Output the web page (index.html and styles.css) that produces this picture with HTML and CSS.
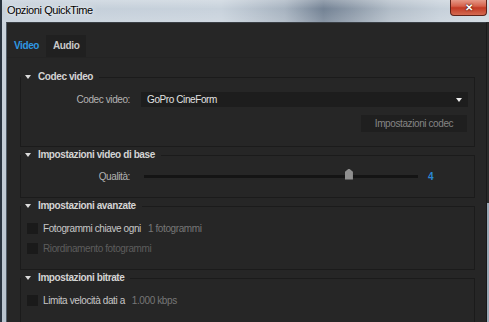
FILE: index.html
```html
<!DOCTYPE html>
<html lang="it">
<head>
  <meta charset="UTF-8">
  <meta name="viewport" content="width=device-width, initial-scale=1.0">
  <title>Opzioni QuickTime</title>
  <link rel="stylesheet" href="styles.css">
</head>
<body>
  <div class="window">
    <div class="titlebar">
      <span class="title">Opzioni QuickTime</span>
      <span class="close-btn">&#x2715;</span>
    </div>
    <div class="frame">
      <div class="client">
        <div class="tabs">
          <span class="tab active">Video</span>
          <span class="tab">Audio</span>
        </div>
        <div class="panel">
          <!-- codec -->
          <fieldset class="group">
            <legend><span class="twisty"></span>Codec video</legend>
            <div class="field-row">
              <span class="field-label">Codec video:</span>
              <div class="select"><span>GoPro CineForm</span><span class="select-arrow"></span></div>
            </div>
            <div class="actions">
              <span class="btn disabled">Impostazioni codec</span>
            </div>
          </fieldset>

          <!-- basic video settings -->
          <fieldset class="group">
            <legend><span class="twisty"></span>Impostazioni video di base</legend>
            <div class="field-row slider-row">
              <span class="field-label">Qualità:</span>
              <div class="slider">
                <div class="track"><span class="thumb" style="left: 74.8%;"></span></div>
                <span class="slider-value">4</span>
              </div>
            </div>
          </fieldset>

          <!-- advanced -->
          <fieldset class="group">
            <legend><span class="twisty"></span>Impostazioni avanzate</legend>
            <div class="check-row">
              <span class="check"></span>
              <span>Fotogrammi chiave ogni</span>
              <span class="hint">1 fotogrammi</span>
            </div>
            <div class="check-row disabled">
              <span class="check"></span>
              <span>Riordinamento fotogrammi</span>
            </div>
          </fieldset>

          <!-- bitrate -->
          <fieldset class="group">
            <legend><span class="twisty"></span>Impostazioni bitrate</legend>
            <div class="check-row">
              <span class="check"></span>
              <span>Limita velocità dati a</span>
              <span class="hint">1.000 kbps</span>
            </div>
            <div class="check-row spacer"></div>
          </fieldset>
        </div>
      </div>
    </div>
  </div>
</body>
</html>
```

FILE: styles.css
```css
/* Base */
* {
  box-sizing: border-box;
}
html, body {
  margin: 0;
  padding: 0;
}
body {
  width: 489px;
  height: 322px;
  overflow: hidden;
  font-family: "Liberation Sans", Arial, sans-serif;
  font-size: 10px;
  letter-spacing: -0.4px;
  background: #c5cdd6;
}

/* Window chrome */
.window {
  height: 322px;
  display: flex;
  flex-direction: column;
  border-left: 2px solid #29333f;
  background: linear-gradient(#ccd5de, #b8c3ce);
}
.titlebar {
  height: 22px;
  flex: none;
  display: flex;
  justify-content: space-between;
  align-items: flex-start;
  background:
    linear-gradient(rgba(255,255,255,0.25), rgba(255,255,255,0) 40%, rgba(255,255,255,0.15)),
    linear-gradient(to right, #c3ced9 0%, #c8d2dc 45%, #a7b3c0 58%, #738294 66%, #8d9aa9 72%, #b2bdc8 80%, #c6d0da 90%, #cfd8e0 100%);
}
.title {
  padding: 4px 0 0 5px;
  font-size: 11px;
  letter-spacing: -0.4px;
  color: #000;
  text-shadow: 0 0 6px rgba(255,255,255,0.9), 0 0 2px rgba(255,255,255,0.8);
}
.close-btn {
  width: 37px;
  height: 17px;
  margin-right: 2px;
  margin-top: -1px;
  border: 1px solid #5e2219;
  border-top: none;
  border-radius: 0 0 4px 4px;
  background: linear-gradient(#e8a291, #d5614b 45%, #c23a24 55%, #d46a52);
  color: #fff;
  font-size: 10px;
  font-weight: bold;
  text-align: center;
  line-height: 17px;
  text-shadow: 0 0 1px #3a0e08, 0 0 2px #5a1a10;
  letter-spacing: 0;
}
.frame {
  flex: 1;
  display: flex;
  padding: 0 2px 0 4px;
  min-height: 0;
  background: linear-gradient(#2c2c2c 0 181px, #9aa8b6 181px) right / 2px 100% no-repeat;
}
.client {
  flex: 1;
  background: #262626;
  border-left: 1px solid #505b67;
  border-right: 1px solid #1a1a1a;
  border-top: 1px solid #3a3f45;
}

/* Tabs */
.tabs {
  display: flex;
  padding-top: 12px;
}
.tab {
  height: 22px;
  line-height: 22px;
  padding: 0 7px;
  font-weight: bold;
  color: #c9c9c9;
  background: #202020;
}
.tab.active {
  color: #2f98e2;
  background: #262626;
}

/* Panel + groups */
.panel {
  padding: 13px 11px 0 13px;
  border-top: 1px solid #232323;
}
.group {
  margin: 2px 0 0;
  padding: 9px 6px 14px 0;
  border: 1px solid #1b1b1b;
  min-width: 0;
}
.group:first-child {
  margin-top: 0;
}
.group legend {
  display: flex;
  align-items: center;
  gap: 7px;
  height: 12px;
  line-height: 12px;
  padding: 0 6px 0 4px;
  font-weight: bold;
  color: #d4d4d4;
}
.twisty {
  width: 0;
  height: 0;
  border-left: 3px solid transparent;
  border-right: 3px solid transparent;
  border-top: 4px solid #dcdcdc;
}

.field-row {
  display: grid;
  grid-template-columns: 109px 1fr;
  column-gap: 11px;
  align-items: center;
}
.field-label {
  text-align: right;
  color: #b3b3b3;
}
.select {
  height: 15px;
  display: flex;
  align-items: center;
  justify-content: space-between;
  padding: 0 6px;
  background: #1d1d1d;
  color: #e2e2e2;
}
.select-arrow {
  width: 0;
  height: 0;
  border-left: 3.5px solid transparent;
  border-right: 3.5px solid transparent;
  border-top: 4px solid #ececec;
}
.actions {
  display: flex;
  justify-content: flex-end;
  margin-top: 8px;
  padding-right: 1px;
}
.btn {
  width: 106px;
  height: 17px;
  line-height: 17px;
  text-align: center;
  background: #1f1f1f;
  color: #cfcfcf;
}
.btn.disabled {
  color: #858585;
}

/* Slider */
.slider-row {
  column-gap: 14px;
  height: 14px;
  margin-top: -1px;
}
.slider {
  display: flex;
  align-items: center;
  gap: 10px;
}
.track {
  position: relative;
  width: 274px;
  height: 3px;
  background: #141414;
}
.thumb {
  position: absolute;
  top: -6px;
  width: 8px;
  height: 11px;
  margin-left: -4px;
  background: #8f8f8f;
  clip-path: polygon(50% 0, 100% 30%, 100% 100%, 0 100%, 0 30%);
}
.slider-value {
  color: #2a86d4;
  font-weight: bold;
}

/* Checkbox rows */
.check-row {
  display: flex;
  align-items: center;
  gap: 5px;
  height: 14px;
  padding-left: 6px;
  color: #c6c6c6;
}
.check-row + .check-row {
  margin-top: 6px;
}
.check {
  width: 11px;
  height: 11px;
  background: #1a1a1a;
}
.hint {
  margin-left: 2px;
  color: #767676;
}
.check-row.disabled {
  color: #5d5d5d;
}
```
